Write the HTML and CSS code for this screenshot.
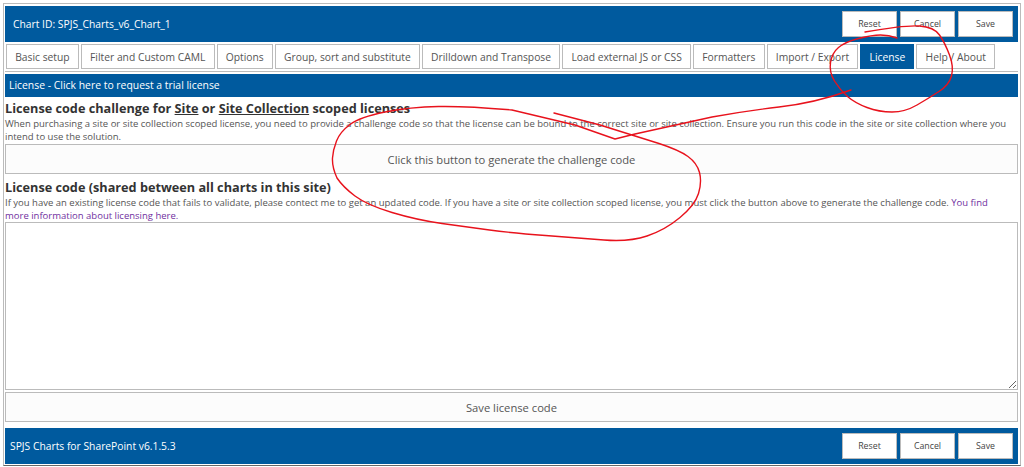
FILE: index.html
```html
<!DOCTYPE html>
<html lang="en">
<head>
    <meta charset="UTF-8">
    <meta name="viewport" content="width=device-width, initial-scale=1.0">
    <title>SPJS Charts for SharePoint</title>
    <link rel="stylesheet" href="styles.css">
</head>
<body>

    <div class="dialog">

        <!-- Top bar -->
        <div class="blue-bar">
            <span class="bar-title">Chart ID: SPJS_Charts_v6_Chart_1</span>
            <div class="bar-buttons">
                <button class="bar-btn">Reset</button>
                <button class="bar-btn">Cancel</button>
                <button class="bar-btn">Save</button>
            </div>
        </div>

        <!-- Tabs -->
        <div class="tabs">
            <div class="tab">Basic setup</div>
            <div class="tab">Filter and Custom CAML</div>
            <div class="tab">Options</div>
            <div class="tab">Group, sort and substitute</div>
            <div class="tab">Drilldown and Transpose</div>
            <div class="tab">Load external JS or CSS</div>
            <div class="tab">Formatters</div>
            <div class="tab">Import / Export</div>
            <div class="tab active">License</div>
            <div class="tab">Help / About</div>
        </div>

        <div class="trial-bar">License - Click here to request a trial license</div>

        <!-- Challenge code -->
        <h2 class="section-title">License code challenge for <u>Site</u> or <u>Site Collection</u> scoped licenses</h2>
        <p class="section-text">When purchasing a site or site collection scoped license, you need to provide a challenge code so that the license can be bound to the correct site or site collection. Ensure you run this code in the site or site collection where you intend to use the solution.</p>
        <button class="wide-btn challenge-btn">Click this button to generate the challenge code</button>

        <!-- License code -->
        <h2 class="section-title">License code (shared between all charts in this site)</h2>
        <p class="section-text">If you have an existing license code that fails to validate, please contect me to get an updated code. If you have a site or site collection scoped license, you must click the button above to generate the challenge code. <a href="#" class="info-link">You find more information about licensing here.</a></p>
        <textarea class="license-input"></textarea>
        <button class="wide-btn save-btn">Save license code</button>

        <!-- Footer bar -->
        <div class="blue-bar footer-bar">
            <span class="bar-title">SPJS Charts for SharePoint v6.1.5.3</span>
            <div class="bar-buttons">
                <button class="bar-btn">Reset</button>
                <button class="bar-btn">Cancel</button>
                <button class="bar-btn">Save</button>
            </div>
        </div>

    </div>

    <!-- Red pen marks drawn on top of the screenshot -->
    <svg class="pen-marks" width="1024" height="467" viewBox="0 0 1024 467">
        <path d="M865 32 Q905 25 919.5 26 Q934 27 939.5 35 Q945 43 949.5 55 Q954 67 951.5 76 Q949 85 939 91.5 Q929 98 917 105 Q905 112 892 112 Q879 112 867 107.5 Q855 103 847.5 96.5 Q840 90 834.5 81 Q829 72 830.5 62.5 Q832 53 838.5 47.5 Q845 42 858.5 38.5 Q872 35 880.5 35 Q889 35 897 38"/>
        <path d="M851 90 Q815 103 779 107 Q745 111 712 117 L635 134 L615 139 L575 125 L512 110 Q467 106 438.5 106.5 Q410 107 385 112 Q360 117 350 124.5 Q340 132 336.5 141 Q333 150 332.5 158 Q332 167 337 178 Q343 187 355 196 Q367 205 392 212.5 Q417 220 442 223.5 Q467 227 489.5 230 Q512 233 545.5 235.5 Q579 238 604 240 Q629 242 647 236 Q665 230 680 217.5 Q695 205 698.5 193.5 Q702 182 699.5 172.5 Q697 163 688 156.5 Q679 150 659 143.5 L600 125 L554 113"/>
    </svg>

</body>
</html>
```

FILE: styles.css
```css
/* Chart setup dialog, license tab */
* {
    box-sizing: border-box;
}

body {
    margin: 0;
    padding: 3px 3px 0 3px;
    background-color: white;
    font-family: "Open Sans", Arial, sans-serif;
    color: #444;
}

.dialog {
    height: 463px;
    border: 1px solid #bbb;
    border-bottom: 1px solid #666;
    padding: 2px 2px 0 1px;
    display: flex;
    flex-direction: column;
}

.blue-bar {
    height: 36px;
    flex: none;
    background-color: #005a9e;
    color: white;
    display: flex;
    align-items: center;
    justify-content: space-between;
    padding: 0 5px 0 8px;
}

.bar-title {
    font-size: 10.3px;
}

.bar-buttons {
    display: flex;
    gap: 3px;
}

.bar-btn {
    width: 55px;
    height: 26px;
    padding: 0;
    border: 1px solid #bbb;
    background-color: white;
    color: #444;
    font-family: inherit;
    font-size: 8.8px;
}

.tabs {
    display: flex;
    gap: 2px;
    padding: 2px 1px;
    border-bottom: 1px solid #bbb;
    height: 30px;
    flex: none;
}

.tab {
    height: 25px;
    padding: 0 8.2px;
    border: 1px solid #bbb;
    color: #555;
    font-size: 10.3px;
    line-height: 24px;
    white-space: nowrap;
}

.tab.active {
    background-color: #005a9e;
    border-color: #005a9e;
    color: white;
}

.trial-bar {
    height: 23px;
    flex: none;
    margin-top: 2px;
    padding-left: 4px;
    background-color: #005a9e;
    color: white;
    font-size: 10.4px;
    line-height: 23px;
}

.section-title {
    margin: 2px 0 0 0;
    font-size: 12.7px;
    line-height: 18px;
    font-weight: bold;
    color: #333;
}

.section-text {
    margin: 0;
    padding-right: 8px;
    font-size: 9.5px;
    line-height: 13px;
    color: #555;
}

.info-link {
    color: #7030a0;
    text-decoration: none;
}

.wide-btn {
    display: block;
    width: 100%;
    flex: none;
    padding: 0;
    border: 1px solid #bbb;
    background-color: #fcfcfc;
    color: #555;
    font-family: inherit;
    font-size: 11.2px;
}

.challenge-btn {
    height: 30px;
    margin: 1px 0 2px 0;
}

.license-input {
    display: block;
    width: 100%;
    height: 168px;
    flex: none;
    margin: 0;
    border: 1px solid #bbb;
    background-color: white;
}

.save-btn {
    height: 30px;
    margin-top: 2px;
}

.footer-bar {
    margin-top: 6px;
    padding-left: 5px;
}

.pen-marks {
    position: absolute;
    top: 0;
    left: 0;
    pointer-events: none;
}

.pen-marks path {
    fill: none;
    stroke: #e8121c;
    stroke-width: 1.4;
    stroke-linejoin: round;
    stroke-linecap: round;
}
```
